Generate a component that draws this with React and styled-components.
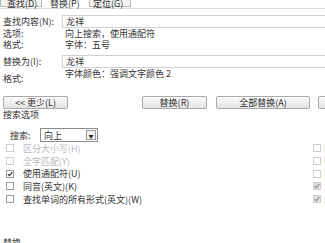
import styled, { createGlobalStyle } from 'styled-components'

const GlobalStyle = createGlobalStyle`
    html, body {
        margin: 0;
        padding: 0;
        background: #ffffff;
    }
    body {
        width: 325px;
        height: 243px;
        overflow: hidden;
    }
`

const Dialog = styled.div`
    width: 345px;
    height: 243px;
    overflow: hidden;
    background: #ffffff;
    font-family: "Noto Sans CJK SC", "Noto Sans", sans-serif;
    font-size: 9px;
    color: #333;
    display: flex;
    flex-direction: column;
`

const TabStrip = styled.div`
    display: flex;
    align-items: flex-start;
    height: 11px;
    margin-top: -3px;
    border-bottom: 1px solid #dcdcdc;
    flex-shrink: 0;
`

const Tab = styled.div`
    height: 10px;
    box-sizing: border-box;
    padding: 3px 0 0 ${props => props.$pad}px;
    width: ${props => props.$width}px;
    margin-left: ${props => props.$gap}px;
    line-height: 8px;
    white-space: nowrap;
    border: ${props => props.$active ? 'none' : '1px solid #b8b8b8'};
    border-top: none;
    background: ${props => props.$active ? 'transparent' : '#f4f4f4'};
    color: #333;
`

const Panel = styled.div`
    display: flex;
    flex-direction: column;
    padding: 0 0 0 3px;
`

const FieldRow = styled.div`
    display: flex;
    align-items: center;
    height: 13px;
    margin-top: ${props => props.$top}px;
`

const Label = styled.div`
    width: 59px;
    flex-shrink: 0;
    line-height: 11px;
    white-space: nowrap;
    padding-top: ${props => props.$low ? 5 : 0}px;
`

const TextBox = styled.div`
    flex: 1;
    height: 13px;
    box-sizing: border-box;
    border: 1px solid #d0d0d0;
    border-right: none;
    padding-left: 3px;
    line-height: 11px;
`

const InfoRow = styled.div`
    display: flex;
    align-items: flex-start;
    height: ${props => props.$height || 11}px;
`

const Value = styled.div`
    padding-left: 3px;
    line-height: 11px;
    white-space: nowrap;
`

const ButtonRow = styled.div`
    display: flex;
    height: 13px;
    margin-top: 12px;
`

const Button = styled.div`
    width: ${props => props.$width}px;
    margin-left: ${props => props.$gap || 0}px;
    height: 13px;
    box-sizing: border-box;
    flex-shrink: 0;
    border: 1px solid #a9a9a9;
    border-radius: 2px;
    background: linear-gradient(#fbfbfb, #e4e4e4);
    line-height: 11px;
    text-align: center;
    white-space: nowrap;
    color: #333;
`

const SectionTitle = styled.div`
    line-height: 11px;
    height: 11px;
`

const SearchRow = styled.div`
    display: flex;
    align-items: center;
    height: 14px;
    margin-top: 8px;
    padding-left: 7px;
`

const SearchLabel = styled.div`
    width: 30px;
    line-height: 11px;
`

const Select = styled.div`
    width: 58px;
    height: 14px;
    box-sizing: border-box;
    border: 1px solid #8c8c8c;
    display: flex;
    align-items: center;
    justify-content: space-between;
    padding-left: 3px;
    line-height: 11px;
`

const SelectArrow = styled.div`
    width: 10px;
    height: 10px;
    box-sizing: border-box;
    margin-right: 1px;
    border: 1px solid #9a9a9a;
    background: #f0f0f0;
    display: flex;
    align-items: center;
    justify-content: center;
    font-size: 5px;
    color: #222;
`

const Options = styled.div`
    display: grid;
    grid-template-columns: 310px auto;
`

const OptionColumn = styled.div`
    display: flex;
    flex-direction: column;
`

const Option = styled.div`
    display: flex;
    align-items: center;
    height: 12.7px;
    padding-left: ${props => props.$indent || 0}px;
    color: ${props => props.$disabled ? '#b9b9b9' : '#333'};
    white-space: nowrap;
    line-height: 11px;
`

const Box = styled.div`
    width: 8px;
    height: 8px;
    box-sizing: border-box;
    flex-shrink: 0;
    margin-right: ${props => props.$gap}px;
    border: 1px solid ${props => props.$disabled ? '#cfcfcf' : '#9c9c9c'};
    background: ${props => props.$shade ? '#dedede' : '#ffffff'};
    display: flex;
    align-items: center;
    justify-content: center;
`

const Footer = styled.div`
    margin-top: 32px;
    line-height: 11px;
`

const Check = ({ color }) => (
    <svg width="6" height="6" viewBox="0 0 6 6">
        <path d="M0.8 3.1 L2.4 4.7 L5.3 1.2" fill="none" stroke={color} strokeWidth="1.1" />
    </svg>
)

const leftOptions = [
    { text: '区分大小写(H)', disabled: true },
    { text: '全字匹配(Y)', disabled: true },
    { text: '使用通配符(U)', checked: true },
    { text: '同音(英文)(K)' },
    { text: '查找单词的所有形式(英文)(W)' },
]

const rightOptions = [
    { text: '区分前缀(X)' },
    { text: '区分后缀(T)' },
    { text: '区分全/半角(M)' },
    { text: '忽略标点符号(S)', shade: true },
    { text: '忽略空格(W)', shade: true },
]

const App = () => {
    return <>
        <GlobalStyle />
        <Dialog>
            <TabStrip>
                <Tab $width={42} $pad={6} $gap={0}>查找(D)</Tab>
                <Tab $width={30} $pad={0} $gap={8} $active>替换(P)</Tab>
                <Tab $width={42} $pad={3} $gap={9}>定位(G)</Tab>
            </TabStrip>
            <Panel>
                <FieldRow $top={6}>
                    <Label>查找内容(N):</Label>
                    <TextBox>龙祥</TextBox>
                </FieldRow>
                <InfoRow>
                    <Label>选项:</Label>
                    <Value>向上搜索，使用通配符</Value>
                </InfoRow>
                <InfoRow>
                    <Label>格式:</Label>
                    <Value>字体：五号</Value>
                </InfoRow>
                <FieldRow $top={5}>
                    <Label>替换为(I):</Label>
                    <TextBox>龙祥</TextBox>
                </FieldRow>
                <InfoRow $height={16}>
                    <Label $low>格式:</Label>
                    <Value>字体颜色：强调文字颜色 2</Value>
                </InfoRow>
                <ButtonRow>
                    <Button $width={65}>&lt;&lt; 更少(L)</Button>
                    <Button $width={65} $gap={74}>替换(R)</Button>
                    <Button $width={94} $gap={9}>全部替换(A)</Button>
                    <Button $width={70} $gap={8}>查找下一处(F)</Button>
                </ButtonRow>
                <SectionTitle>搜索选项</SectionTitle>
                <SearchRow>
                    <SearchLabel>搜索:</SearchLabel>
                    <Select>
                        <span>向上</span>
                        <SelectArrow>▼</SelectArrow>
                    </Select>
                </SearchRow>
                <Options>
                    <OptionColumn>
                        {leftOptions.map((o, i) =>
                            <Option key={i} $indent={3} $disabled={o.disabled}>
                                <Box $gap={9} $disabled={o.disabled}>
                                    {o.checked && <Check color="#333" />}
                                </Box>
                                {o.text}
                            </Option>
                        )}
                    </OptionColumn>
                    <OptionColumn>
                        {rightOptions.map((o, i) =>
                            <Option key={i} $disabled>
                                <Box $gap={3} $disabled $shade={o.shade}>
                                    {o.shade && <Check color="#8a8a8a" />}
                                </Box>
                                {o.text}
                            </Option>
                        )}
                    </OptionColumn>
                </Options>
                <Footer>替换</Footer>
            </Panel>
        </Dialog>
    </>
}

export default App
